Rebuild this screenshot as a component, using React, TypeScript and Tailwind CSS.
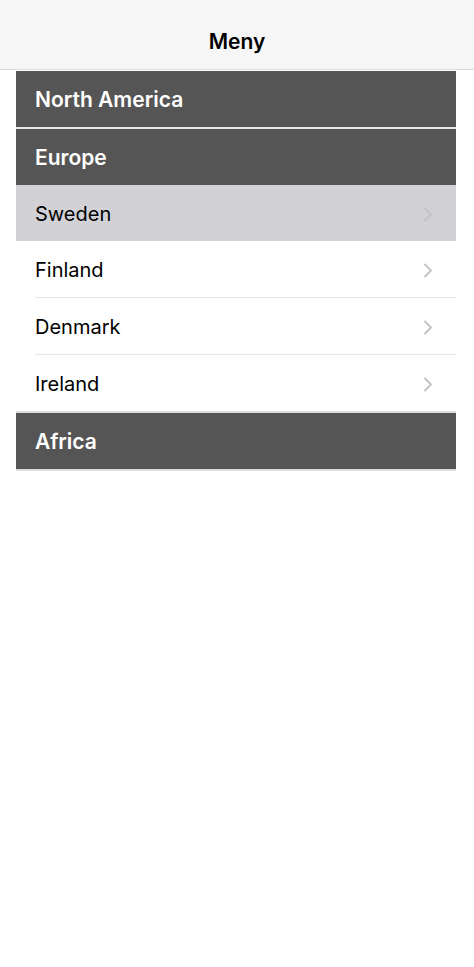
const countries = ['Sweden', 'Finland', 'Denmark', 'Ireland'];

function SectionHeader({ title }: { title: string }) {
  return (
    <div className="h-[56px] bg-[#555555] flex items-center pl-[19px] pt-[2px]">
      <span className="text-white text-[21px] font-semibold">{title}</span>
    </div>
  );
}

function Chevron() {
  return (
    <svg width="10" height="15" viewBox="0 0 10 15" fill="none" stroke="#c4c4c7" strokeWidth="2" strokeLinecap="round" strokeLinejoin="round">
      <polyline points="2,1.5 8,7.5 2,13.5" />
    </svg>
  );
}

export default function App() {
  return (
    <div className="min-h-[967px] bg-white" style={{ fontFamily: 'Inter, "Liberation Sans", sans-serif' }}>
      {/* Nav bar */}
      <div className="h-[70px] bg-[#f7f6f7] border-b border-[#dcdcdc] flex items-center justify-center pt-[14px]">
        <span className="text-[21px] font-semibold text-black">Meny</span>
      </div>

      <div className="ml-[16px] mr-[18px]">
        <div className="pt-[1px]">
          <SectionHeader title="North America" />
        </div>
        <div className="h-[2px] bg-[#e4e4e4]" />
        <SectionHeader title="Europe" />

        {countries.map((name, i) => (
          <div key={name} className={i === 0 ? 'bg-[#d1d1d6]' : 'bg-white'}>
            <div className="h-[56px] flex items-center justify-between pl-[19px] pr-[23px] pt-[2px]">
              <span className="text-[20px] text-black">{name}</span>
              <Chevron />
            </div>
            {(i === 1 || i === 2) && <div className="h-px bg-[#e6e6e6] ml-[19px]" />}
          </div>
        ))}

        <div className="h-[2px] bg-[#dedede]" />
        <SectionHeader title="Africa" />
        <div className="h-[2px] bg-[#dedede]" />
      </div>
    </div>
  );
}
